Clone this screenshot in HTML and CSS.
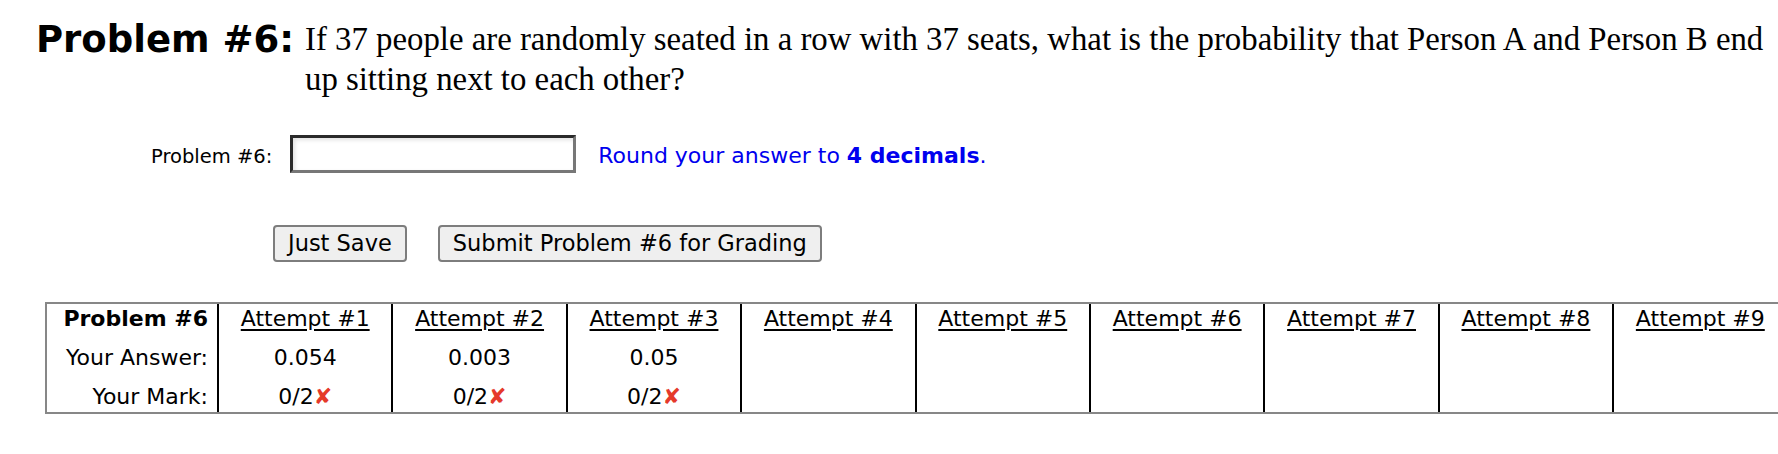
FILE: index.html
```html
<!DOCTYPE html>
<html lang="en">
<head>
<meta charset="utf-8">
<title>Problem #6</title>
<link rel="stylesheet" href="styles.css">
</head>
<body>
<div class="question">
  <div class="q-label">Problem #6:</div>
  <div class="q-text">If 37 people are randomly seated in a row with 37 seats, what is the probability that Person A and Person B end up sitting next to each other?</div>
</div>

<div class="answer-row">
  <label class="a-label" for="ans">Problem #6:</label>
  <input class="a-input" id="ans" type="text">
  <span class="a-hint">Round your answer to <b>4 decimals</b>.</span>
</div>

<div class="buttons">
  <button class="btn" type="button">Just Save</button>
  <button class="btn" type="button">Submit Problem #6 for Grading</button>
</div>

<table class="attempts">
  <colgroup>
    <col class="c-first">
    <col class="c-att"><col class="c-att"><col class="c-att">
    <col class="c-att"><col class="c-att"><col class="c-att">
    <col class="c-att"><col class="c-att"><col class="c-att">
  </colgroup>
  <tr class="r1">
    <th class="first">Problem #6</th>
    <td class="col"><a href="#">Attempt #1</a></td>
    <td class="col"><a href="#">Attempt #2</a></td>
    <td class="col"><a href="#">Attempt #3</a></td>
    <td class="col"><a href="#">Attempt #4</a></td>
    <td class="col"><a href="#">Attempt #5</a></td>
    <td class="col"><a href="#">Attempt #6</a></td>
    <td class="col"><a href="#">Attempt #7</a></td>
    <td class="col"><a href="#">Attempt #8</a></td>
    <td class="col"><a href="#">Attempt #9</a></td>
  </tr>
  <tr class="r2">
    <td class="first">Your Answer:</td>
    <td class="col">0.054</td>
    <td class="col">0.003</td>
    <td class="col">0.05</td>
    <td class="col"></td>
    <td class="col"></td>
    <td class="col"></td>
    <td class="col"></td>
    <td class="col"></td>
    <td class="col"></td>
  </tr>
  <tr class="r3">
    <td class="first">Your Mark:</td>
    <td class="col">0/2<span class="x">✘</span></td>
    <td class="col">0/2<span class="x">✘</span></td>
    <td class="col">0/2<span class="x">✘</span></td>
    <td class="col"></td>
    <td class="col"></td>
    <td class="col"></td>
    <td class="col"></td>
    <td class="col"></td>
    <td class="col"></td>
  </tr>
</table>
</body>
</html>
```

FILE: styles.css
```css
html, body {
  margin: 0;
  padding: 0;
  background: #fff;
  color: #000;
  overflow-x: hidden;
}

body {
  font-family: Verdana, "DejaVu Sans", sans-serif;
  width: 1778px;
}

.question {
  display: flex;
  align-items: flex-start;
  margin: 19px 4px 0 36px;
}

.q-label {
  flex: 0 0 269px;
  font-family: "DejaVu Sans", Verdana, sans-serif;
  font-weight: bold;
  font-size: 37px;
  line-height: 42px;
  white-space: nowrap;
}

.q-text {
  flex: 1 1 auto;
  font-family: "Liberation Serif", "Times New Roman", serif;
  font-size: 32.8px;
  line-height: 40px;
}

.answer-row {
  display: flex;
  align-items: center;
  margin: 36px 0 0 151px;
  height: 38px;
}

.a-label {
  font-size: 19.5px;
  margin-top: 4px;
  margin-right: 18px;
  white-space: nowrap;
}

.a-input {
  box-sizing: border-box;
  width: 286px;
  height: 38px;
  margin: 0 22px 0 0;
  padding: 0 6px;
  border-style: solid;
  border-width: 3px;
  border-color: #2a2a2a #777 #777 #2a2a2a;
  background: #fff;
  box-shadow: inset 2px 2px 4px rgba(0, 0, 0, 0.12);
  font-family: "DejaVu Sans", sans-serif;
  font-size: 19px;
}

.a-hint {
  font-size: 22px;
  color: #0000ee;
  margin-top: 2px;
  white-space: nowrap;
}

.a-hint b {
  font-weight: bold;
}

.buttons {
  display: flex;
  gap: 31px;
  margin: 52px 0 0 273px;
}

.btn {
  box-sizing: border-box;
  height: 37px;
  padding: 0 13px;
  border: 2px solid #7d7d7d;
  border-radius: 4px;
  background: #efefef;
  color: #000;
  font-family: "DejaVu Sans", sans-serif;
  font-size: 22.5px;
  line-height: 1;
  white-space: nowrap;
}

.attempts {
  box-sizing: border-box;
  width: 1700px;
  table-layout: fixed;
  margin: 40px 0 0 45px;
  border: 2px solid #878787;
  border-collapse: separate;
  border-spacing: 0;
  font-size: 22px;
  white-space: nowrap;
}

.c-first { width: 170px; }
.c-att { width: 174.4px; }

.attempts th,
.attempts td {
  box-sizing: border-box;
  height: 36px;
  line-height: 25px;
  padding: 0 8px;
  vertical-align: top;
  overflow: visible;
}

.attempts .first {
  text-align: right;
  padding-right: 9px;
}

.attempts th.first {
  font-weight: bold;
}

.attempts .col {
  border-left: 2px solid #000;
  text-align: center;
}

.attempts a {
  color: #000;
  text-decoration: underline;
  text-underline-offset: 3px;
}

.r1 th, .r1 td { padding-top: 2px; }
.r2 td { padding-top: 5px; }
.r3 td { padding-top: 8px; }

.x {
  color: #e5392b;
  font-weight: bold;
}
```
